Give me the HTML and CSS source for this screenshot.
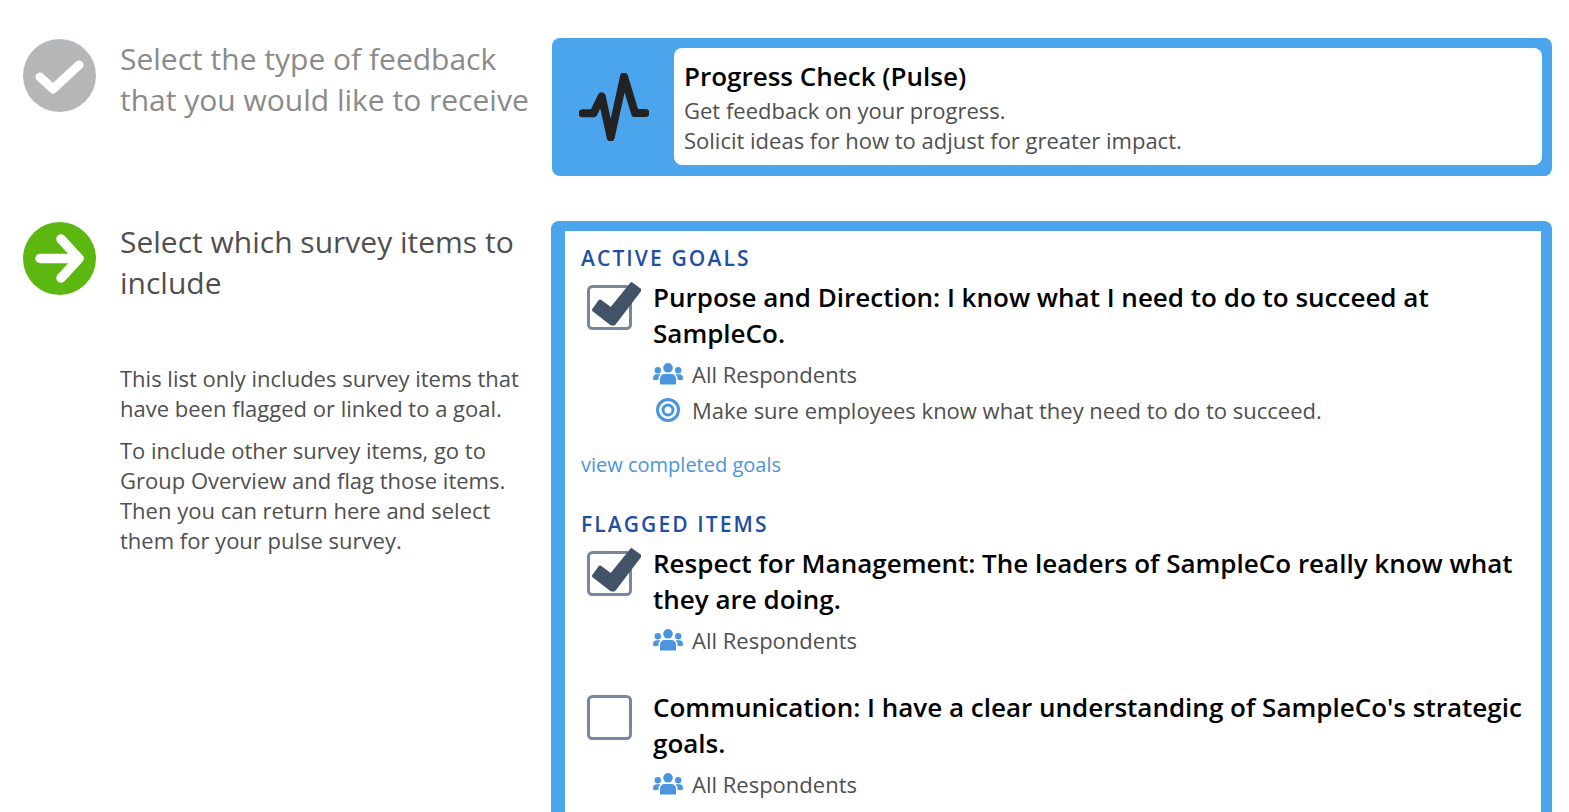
FILE: index.html
```html
<!DOCTYPE html>
<html lang="en">

<head>
  <meta charset="UTF-8">
  <title>Select survey items</title>
  <link rel="stylesheet" href="styles.css">
</head>

<body>
  <!-- Step 1 -->
  <section class="step step-done">
    <div class="step-side">
      <svg class="step-icon" viewBox="0 0 73 73">
        <circle cx="36.5" cy="36.5" r="36.5" fill="#b5b6b8" />
        <path d="M17 38 L30 50 L56 26" fill="none" stroke="#fff" stroke-width="9" stroke-linecap="round" stroke-linejoin="round" />
      </svg>
      <h2 class="step-title">Select the type of feedback that you would like to receive</h2>
    </div>
    <div class="pulse-card">
      <div class="pulse-icon">
        <svg class="pulse-svg" viewBox="0 0 70 68" width="70" height="68">
          <path d="M3.5 40.3 H14.5 L22.7 23.3 L31.7 64.5 L45 3.5 L56 40 H66.5" fill="none" stroke="#222" stroke-width="8" stroke-linecap="round" stroke-linejoin="round" />
        </svg>
      </div>
      <div class="pulse-body">
        <div class="pulse-title">Progress Check (Pulse)</div>
        <div>Get feedback on your progress.</div>
        <div>Solicit ideas for how to adjust for greater impact.</div>
      </div>
    </div>
  </section>

  <!-- Step 2 -->
  <section class="step">
    <div class="step-side">
      <svg class="step-icon" viewBox="0 0 73 73">
        <circle cx="36.5" cy="36.5" r="36.5" fill="#5cb811" />
        <path d="M17 36.5 H55 M38 17 L56 36.5 L38 56" fill="none" stroke="#fff" stroke-width="9.5" stroke-linecap="round" stroke-linejoin="round" />
      </svg>
      <div>
        <h2 class="step-title step-title-active">Select which survey items to include</h2>
        <p class="step-note step-note-first">This list only includes survey items that have been flagged or linked to a goal.</p>
        <p class="step-note">To include other survey items, go to Group Overview and flag those items. Then you can return here and select them for your pulse survey.</p>
      </div>
    </div>

    <div class="items-card">
      <h3 class="items-heading">ACTIVE GOALS</h3>
      <div class="item">
        <svg class="checkbox" viewBox="0 0 54 52">
          <rect x="1.5" y="7.5" width="42" height="42" rx="4" fill="#fff" stroke="#76889d" stroke-width="3" />
          <path class="tick" d="M13 22 L24 30 L44.5 4.7 L53 11 L27 45 H24.5 L6.5 31 Z" />
        </svg>
        <div>
          <div class="item-title">Purpose and Direction: I know what I need to do to succeed at SampleCo.</div>
          <div class="item-meta">
            <svg class="meta-icon" viewBox="0 0 30 22"><use href="#people" /></svg>All Respondents
          </div>
          <div class="item-meta">
            <svg class="meta-icon" viewBox="0 0 30 24">
              <circle cx="15" cy="12" r="10.5" fill="none" stroke="#4a94e0" stroke-width="3" />
              <circle cx="15" cy="12" r="5" fill="none" stroke="#4a94e0" stroke-width="3" />
            </svg>Make sure employees know what they need to do to succeed.
          </div>
        </div>
      </div>
      <a class="view-link" href="#">view completed goals</a>

      <h3 class="items-heading items-heading-flagged">FLAGGED ITEMS</h3>
      <div class="item">
        <svg class="checkbox" viewBox="0 0 54 52">
          <rect x="1.5" y="7.5" width="42" height="42" rx="4" fill="#fff" stroke="#76889d" stroke-width="3" />
          <path class="tick" d="M13 22 L24 30 L44.5 4.7 L53 11 L27 45 H24.5 L6.5 31 Z" />
        </svg>
        <div>
          <div class="item-title">Respect for Management: The leaders of SampleCo really know what they are doing.</div>
          <div class="item-meta">
            <svg class="meta-icon" viewBox="0 0 30 22"><use href="#people" /></svg>All Respondents
          </div>
        </div>
      </div>
      <div class="item item-last">
        <svg class="checkbox" viewBox="0 0 54 52">
          <rect x="1.5" y="7.5" width="42" height="42" rx="4" fill="#fff" stroke="#76889d" stroke-width="3" />
        </svg>
        <div>
          <div class="item-title">Communication: I have a clear understanding of SampleCo's strategic goals.</div>
          <div class="item-meta">
            <svg class="meta-icon" viewBox="0 0 30 22"><use href="#people" /></svg>All Respondents
          </div>
        </div>
      </div>
    </div>
  </section>

  <!-- Shared icon -->
  <svg class="icon-defs" width="0" height="0">
    <symbol id="people" viewBox="0 0 30 22">
      <g fill="#4a94e0">
        <circle cx="15" cy="4.8" r="4.8" />
        <circle cx="4.8" cy="7.2" r="3.2" />
        <circle cx="25.2" cy="7.2" r="3.2" />
        <path d="M7 21 V16.5 Q7 11 12 11 H18 Q23 11 23 16.5 V21 Q23 21.6 22 21.6 H8 Q7 21.6 7 21 Z" />
        <path d="M0 15.5 Q0 11.2 4 11.2 H7.5 Q5.3 13 5.3 17 H1 Q0 17 0 15.5 Z" />
        <path d="M30 15.5 Q30 11.2 26 11.2 H22.5 Q24.7 13 24.7 17 H29 Q30 17 30 15.5 Z" />
      </g>
    </symbol>
  </svg>
</body>

</html>
```

FILE: styles.css
```css
/* General */
html,
body {
  height: 812px;
  overflow: hidden;
}

body {
  box-sizing: border-box;
  margin: 0;
  padding: 38px 17px 0 23px;
  background-color: #fff;
  font-family: "Open Sans", Arial, sans-serif;
  color: #4f4f4f;
}

.step {
  display: flex;
  gap: 18px;
  margin-bottom: 45px;
}

.step-side {
  display: flex;
  width: 510px;
  flex-shrink: 0;
  gap: 24px;
}

.step-icon {
  width: 73px;
  height: 73px;
  margin-top: 1px;
  flex-shrink: 0;
}

.step-title {
  margin: 0;
  font-size: 30px;
  font-weight: 400;
  line-height: 41px;
  color: #4f4f4f;
}

.step-done .step-title {
  color: #8a8a8a;
}

.step-note {
  width: 405px;
  margin: 0 0 12px;
  font-size: 22px;
  line-height: 30px;
}

.step-note-first {
  margin-top: 60px;
}

/* Pulse card */
.pulse-card {
  display: flex;
  flex: 1;
  height: 117px;
  margin-left: 1px;
  border: 10px solid #4aa5ec;
  border-bottom-width: 11px;
  border-left: 0;
  border-radius: 8px;
  background-color: #4aa5ec;
}

.pulse-icon {
  display: flex;
  align-items: center;
  justify-content: center;
  width: 122px;
  flex-shrink: 0;
}

.pulse-svg {
  margin-left: 2px;
}

.pulse-body {
  flex: 1;
  padding: 10px 10px 0;
  border-radius: 8px;
  background-color: #fff;
  font-size: 22px;
  line-height: 30px;
}

.pulse-title {
  font-size: 26px;
  font-weight: 600;
  line-height: 37px;
  color: #000;
}

/* Items card */
.items-card {
  flex: 1;
  height: 700px;
  padding: 13px 10px 0 16px;
  border: 10px solid #4aa5ec;
  border-right-width: 11px;
  border-left-width: 14px;
  border-radius: 8px;
  background-color: #fff;
}

.items-heading {
  margin: 0;
  font-size: 21px;
  font-weight: 600;
  line-height: 28px;
  letter-spacing: 2.1px;
  color: #1f4fa3;
}

.items-heading-flagged {
  margin-top: 30px;
}

.item {
  display: flex;
  gap: 12px;
  margin-top: 7px;
  padding-left: 6px;
}

.item-last {
  margin-top: 34px;
}

.checkbox {
  width: 54px;
  height: 52px;
  flex-shrink: 0;
}

.tick {
  fill: #425368;
  stroke: #425368;
  stroke-width: 3;
  stroke-linejoin: round;
}

.item-title {
  font-size: 26px;
  font-weight: 600;
  line-height: 36px;
  color: #000;
}

.item-meta {
  display: flex;
  align-items: center;
  margin-top: 6px;
  font-size: 22px;
  line-height: 30px;
}

.item-title + .item-meta {
  margin-top: 8px;
}

.meta-icon {
  width: 30px;
  height: 24px;
  margin-right: 9px;
}

.view-link {
  display: block;
  margin-top: 25px;
  font-size: 20px;
  line-height: 30px;
  color: #4a94e0;
  text-decoration: none;
}

.icon-defs {
  position: absolute;
}
```
